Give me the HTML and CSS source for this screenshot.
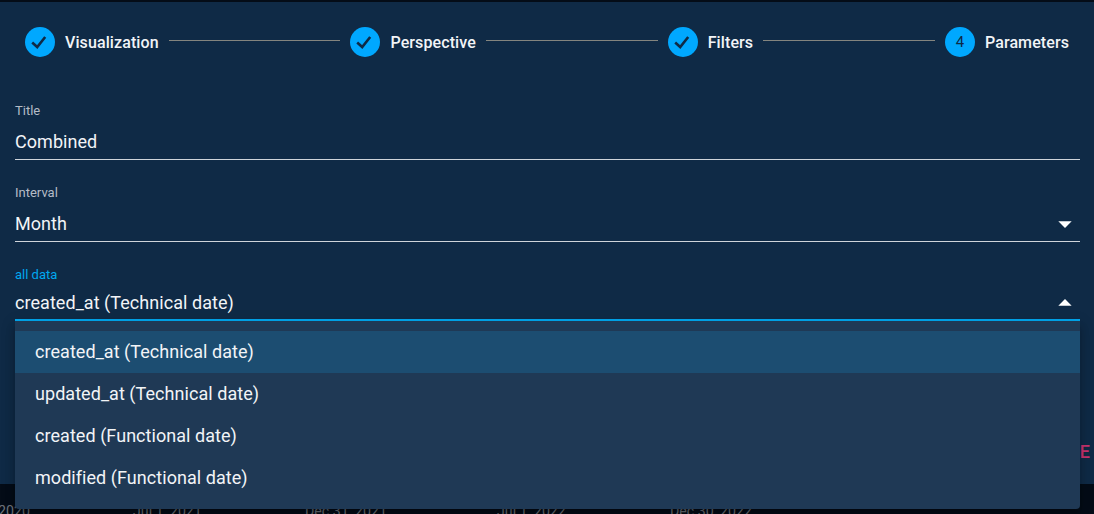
FILE: index.html
```html
<!DOCTYPE html>
<html lang="en">
<head>
<meta charset="utf-8">
<title>Parameters</title>
<link rel="stylesheet" href="styles.css">
</head>
<body>
<div class="page">
  <main class="dialog">
    <ol class="stepper">
      <li class="step"><span class="dot"><svg viewBox="0 0 30 30" class="check"><path d="M7.2 15.6l5 4.4 8-10"/></svg></span><span class="step-label">Visualization</span></li>
      <li class="line"></li>
      <li class="step"><span class="dot"><svg viewBox="0 0 30 30" class="check"><path d="M7.2 15.6l5 4.4 8-10"/></svg></span><span class="step-label">Perspective</span></li>
      <li class="line"></li>
      <li class="step"><span class="dot"><svg viewBox="0 0 30 30" class="check"><path d="M7.2 15.6l5 4.4 8-10"/></svg></span><span class="step-label">Filters</span></li>
      <li class="line"></li>
      <li class="step"><span class="dot">4</span><span class="step-label">Parameters</span></li>
    </ol>
    <div class="field">
      <label class="field-label">Title</label>
      <div class="field-value">Combined</div>
    </div>
    <div class="field">
      <label class="field-label">Interval</label>
      <div class="field-value">Month<svg viewBox="0 0 24 24" class="caret"><path d="M7 10l5 5 5-5z"/></svg></div>
    </div>
    <div class="field field-open">
      <label class="field-label">all data</label>
      <div class="field-value">created_at (Technical date)<svg viewBox="0 0 24 24" class="caret"><path d="M7 14l5-5 5 5z"/></svg></div>
      <ul class="menu">
        <li class="menu-item selected">created_at (Technical date)</li>
        <li class="menu-item">updated_at (Technical date)</li>
        <li class="menu-item">created (Functional date)</li>
        <li class="menu-item">modified (Functional date)</li>
      </ul>
    </div>
    <span class="behind-action">E</span>
  </main>
  <div class="axis">
    <span class="tick t1">2020</span>
    <span class="tick t2">Jul 1, 2021</span>
    <span class="tick t3">Dec 31, 2021</span>
    <span class="tick t4">Jul 1, 2022</span>
    <span class="tick t5">Dec 30, 2022</span>
  </div>
</div>
</body>
</html>
```
FILE: styles.css
```css
* { box-sizing: border-box; }
html, body { margin: 0; padding: 0; height: 100%; overflow: hidden; }
body { background: #040c17; font-family: Roboto, "Noto Sans", sans-serif; color: #fff; }
.page { width: 1094px; height: 514px; padding-top: 2px; display: flex; flex-direction: column; }
.dialog { position: relative; height: 482px; background: #0f2a46; padding: 0 14px 0 15px; flex: none; }
.stepper { list-style: none; margin: 0; padding: 25px 11px 0 10px; display: flex; align-items: flex-start; height: 101px; }
.step { display: flex; align-items: center; height: 30px; }
.dot { width: 30px; height: 30px; border-radius: 50%; background: #00a8ff; color: #0f2a46; font-size: 15px; font-weight: 400; display: flex; align-items: center; justify-content: center; flex: none; }
.check { width: 30px; height: 30px; fill: none; stroke: #0f2a46; stroke-width: 2.6; }
.step-label { margin-left: 10px; font-size: 16px; font-weight: 500; letter-spacing: .1px; color: #f2f4f7; }
.line { flex: 1; height: 1px; background: #84857f; margin: 13px 10px 0 10px; }
.field { position: relative; height: 82px; }
.field-label { display: block; font-size: 13px; line-height: 16px; color: #b5bcc6; }
.field-value { display: flex; justify-content: space-between; align-items: center; height: 34px; margin-top: 7px; font-size: 18px; letter-spacing: .05px; color: #f2f4f7; border-bottom: 1px solid #cfd4da; padding-bottom: 2px; }
.caret { width: 32px; height: 32px; fill: #fff; margin-right: -1px; flex: none; }
.field-open .field-label { color: #00a8f0; }
.field-open .field-value { border-bottom: 2px solid #00a8f0; height: 32px; margin-top: 6px; padding-bottom: 3px; }
.menu { position: absolute; z-index: 2; left: 0; right: 0; top: 54px; margin: 0; padding: 10px 0; list-style: none; background: #1f3955; border-radius: 0 0 4px 4px; box-shadow: 0 5px 5px -3px rgba(0,0,0,.2), 0 8px 10px 1px rgba(0,0,0,.14), 0 3px 14px 2px rgba(0,0,0,.12); }
.menu-item { height: 42px; padding: 0 20px 2px; display: flex; align-items: center; font-size: 18px; letter-spacing: .05px; color: #f2f4f7; }
.selected { background: #1c4d71; }
.behind-action { position: absolute; right: 4px; top: 439px; font-size: 18px; font-weight: 500; color: #c9336f; }
.axis { position: relative; flex: 1; overflow: hidden; font-size: 14.2px; color: #6f747c; }
.tick { position: absolute; top: 19px; white-space: nowrap; }
.t1 { left: -2px; } .t2 { left: 133px; } .t3 { left: 305px; } .t4 { left: 497px; } .t5 { left: 670px; }
```
